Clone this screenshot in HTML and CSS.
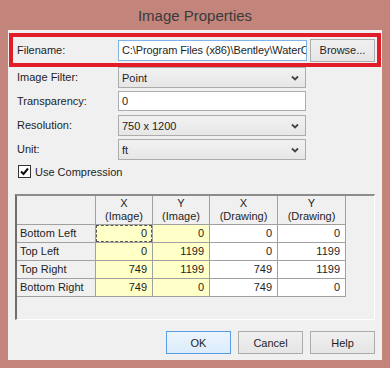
FILE: index.html
```html
<!DOCTYPE html>
<html lang="en">
<head>
    <meta charset="UTF-8">
    <meta name="viewport" content="width=device-width, initial-scale=1.0">
    <title>Image Properties</title>
    <link rel="stylesheet" href="styles.css">
</head>
<body>
    <div class="window">
        <div class="titlebar">Image Properties</div>
        <div class="client">
            <div class="file-row">
                <span class="label">Filename:</span>
                <div class="textbox focused"><span class="path">C:\Program Files (x86)\Bentley\WaterC</span></div>
                <button class="btn browse">Browse...</button>
            </div>

            <div class="field">
                <span class="label">Image Filter:</span>
                <div class="select">
                    <span>Point</span>
                    <svg class="chevron" viewBox="0 0 8 6"><polyline points="1 1.5 4 4.5 7 1.5"></polyline></svg>
                </div>
            </div>
            <div class="field">
                <span class="label">Transparency:</span>
                <div class="textbox">0</div>
            </div>
            <div class="field">
                <span class="label">Resolution:</span>
                <div class="select">
                    <span>750 x 1200</span>
                    <svg class="chevron" viewBox="0 0 8 6"><polyline points="1 1.5 4 4.5 7 1.5"></polyline></svg>
                </div>
            </div>
            <div class="field">
                <span class="label">Unit:</span>
                <div class="select">
                    <span>ft</span>
                    <svg class="chevron" viewBox="0 0 8 6"><polyline points="1 1.5 4 4.5 7 1.5"></polyline></svg>
                </div>
            </div>

            <div class="check-row">
                <span class="checkbox">
                    <svg viewBox="0 0 11 11"><polyline points="2 5.5 4.5 8 9 2.5"></polyline></svg>
                </span>
                <span>Use Compression</span>
            </div>

            <div class="grid-box">
                <div class="grid">
                    <div class="cell head"></div>
                    <div class="cell head">X<br>(Image)</div>
                    <div class="cell head">Y<br>(Image)</div>
                    <div class="cell head">X<br>(Drawing)</div>
                    <div class="cell head">Y<br>(Drawing)</div>

                    <div class="cell name">Bottom Left</div>
                    <div class="cell image current">0</div>
                    <div class="cell image">0</div>
                    <div class="cell drawing">0</div>
                    <div class="cell drawing">0</div>

                    <div class="cell name">Top Left</div>
                    <div class="cell image">0</div>
                    <div class="cell image">1199</div>
                    <div class="cell drawing">0</div>
                    <div class="cell drawing">1199</div>

                    <div class="cell name">Top Right</div>
                    <div class="cell image">749</div>
                    <div class="cell image">1199</div>
                    <div class="cell drawing">749</div>
                    <div class="cell drawing">1199</div>

                    <div class="cell name">Bottom Right</div>
                    <div class="cell image">749</div>
                    <div class="cell image">0</div>
                    <div class="cell drawing">749</div>
                    <div class="cell drawing">0</div>
                </div>
            </div>

            <div class="buttons">
                <button class="btn default">OK</button>
                <button class="btn">Cancel</button>
                <button class="btn">Help</button>
            </div>
        </div>
    </div>
</body>
</html>
```

FILE: styles.css
```css
* {
    margin: 0;
    padding: 0;
    box-sizing: border-box;
}

body {
    font-family: "Liberation Sans", Arial, sans-serif;
    font-size: 11px;
    color: #1e1e1e;
    background: #c3857b;
}

.window {
    width: 390px;
    height: 368px;
    display: flex;
    flex-direction: column;
}

.titlebar {
    height: 30px;
    line-height: 32px;
    text-align: center;
    font-size: 15px;
    color: #3a3a3a;
}

.client {
    margin: 0 8px;
    height: 330px;
    background: #f0f0f0;
    display: flex;
    flex-direction: column;
}

/* red annotation box around the filename row */
.file-row {
    margin: 3px 1px 0;
    height: 34px;
    border: 4px solid #e11d27;
    padding: 0 2px 0 4px;
    display: flex;
    align-items: center;
}

.label {
    width: 101px;
    flex-shrink: 0;
}

.textbox {
    width: 188px;
    height: 20px;
    line-height: 18px;
    padding-left: 3px;
    background: #fff;
    border: 1px solid #abadb3;
    white-space: nowrap;
    overflow: hidden;
}

.textbox.focused {
    width: 189px;
    height: 21px;
    line-height: 19px;
    border-color: #7eb4ea;
}

.path {
    letter-spacing: -0.1px;
}

.btn {
    width: 65px;
    height: 23px;
    font-family: inherit;
    font-size: 11px;
    color: #1e1e1e;
    background: linear-gradient(#f0f0f0, #e5e5e5);
    border: 1px solid #acacac;
}

.btn.browse {
    margin-left: 3px;
}

.btn.default {
    border-color: #569de5;
    background: linear-gradient(#ecf4fc, #dcecfc);
}

.field {
    height: 24px;
    padding-left: 9px;
    display: flex;
    align-items: flex-start;
}

.field:first-of-type {
    margin-top: -1px;
}

.field .label {
    line-height: 21px;
}

.select {
    width: 188px;
    height: 21px;
    padding: 0 6px 0 3px;
    background: linear-gradient(#f2f2f2, #e6e6e6);
    border: 1px solid #acacac;
    display: flex;
    align-items: center;
    justify-content: space-between;
}

.chevron {
    width: 8px;
    height: 6px;
    fill: none;
    stroke: #444;
    stroke-width: 1.8;
}

.check-row {
    margin-top: 2px;
    padding-left: 10px;
    height: 13px;
    display: flex;
    align-items: center;
    gap: 4px;
}

.checkbox {
    width: 13px;
    height: 13px;
    background: #fff;
    border: 1px solid #333;
    display: flex;
}

.checkbox svg {
    width: 11px;
    height: 11px;
    fill: none;
    stroke: #111;
    stroke-width: 2;
}

.grid-box {
    margin: 16px 0 0 7px;
    width: 360px;
    height: 126px;
    border-style: solid;
    border-width: 2px 1px 1px 2px;
    border-color: #8c8c8c #fff #fff #6e6e6e;
    background: #f0f0f0;
}

.grid {
    width: max-content;
    display: grid;
    grid-template-columns: 78px 56px 56px 67px 67px;
    grid-template-rows: 28px repeat(4, 17px);
    gap: 1px;
    padding: 0 1px 1px 0;
    background: #a0a0a0;
}

.cell {
    background: #fff;
    line-height: 17px;
    text-align: right;
    padding-right: 5px;
}

.cell.head {
    background: #f0f0f0;
    text-align: center;
    padding: 1px 0 0;
    line-height: 13px;
}

.cell.name {
    background: #f0f0f0;
    text-align: left;
    padding: 0 0 0 3px;
}

.cell.image {
    background: #ffffc8;
}

.cell.current {
    outline: 1px dashed #555;
    outline-offset: -1px;
}

.buttons {
    margin-top: 11px;
    padding-right: 7px;
    display: flex;
    justify-content: flex-end;
    gap: 7px;
}
```
